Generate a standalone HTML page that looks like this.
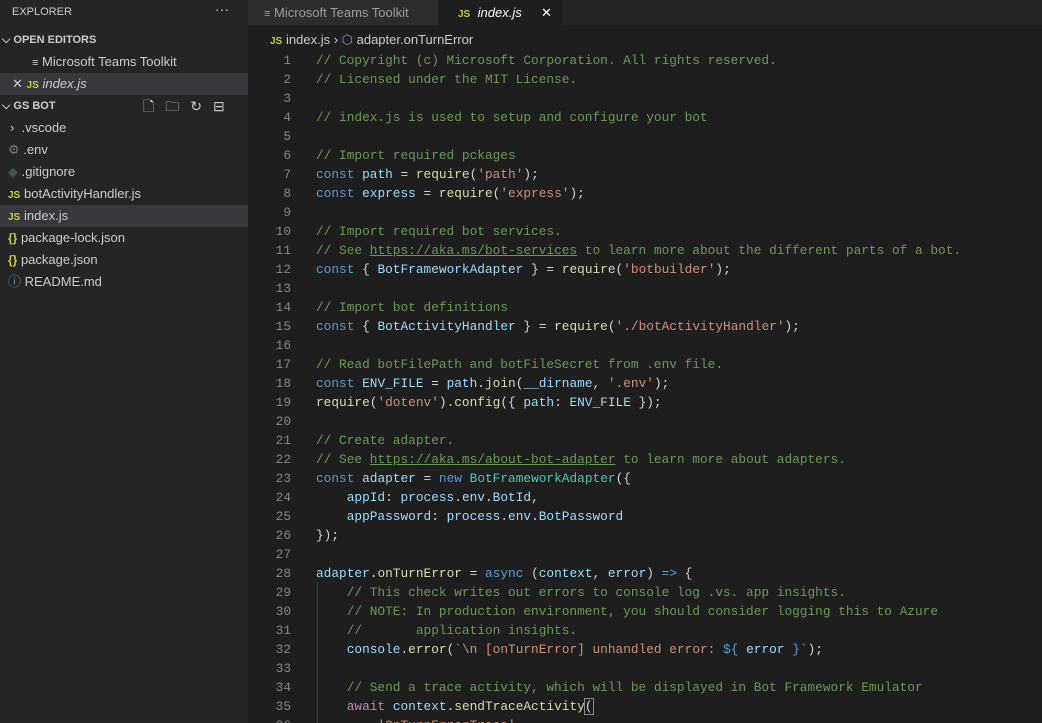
<!DOCTYPE html>
<html style="width:1042px;height:723px;overflow:hidden"><head><meta charset="utf-8"><style>
*{margin:0;padding:0;box-sizing:border-box}
body{width:1042px;height:723px;overflow:hidden;background:#1e1e1e;font-family:"Liberation Sans",sans-serif;color:#ccc;position:relative}
#side{position:absolute;left:0;top:0;width:248px;height:723px;background:#252526}
.row{position:absolute;left:0;width:248px;height:22px;line-height:22px;font-size:13px;color:#ccc;white-space:nowrap}
.sel{background:#37373d}
.hdr{font-size:11px;font-weight:bold;color:#ccc}
.js{color:#cbcb41;font-weight:bold;font-size:10px;display:inline-block;width:16px}
.br{color:#cbcb41;font-weight:bold;font-size:12px}
#tabs{position:absolute;left:248px;top:0;width:794px;height:25px;background:#252526}
.tab{position:absolute;top:0;height:25px;line-height:25px;font-size:13px}
#code{position:absolute;left:248px;top:51px;width:794px;height:672px;overflow:hidden;font-family:"Liberation Mono",monospace;font-size:12.8px;line-height:19px;white-space:pre}
.ln{position:absolute;left:0;width:43px;text-align:right;color:#858585}
.tx{position:absolute;left:68px;color:#d4d4d4}
.c{color:#6a9955}.k{color:#569cd6}.v{color:#9cdcfe}.f{color:#dcdcaa}.s{color:#ce9178}.p{color:#c586c0}.g{color:#4ec9b0}.u{text-decoration:underline}
.guide{position:absolute;left:317px;width:1px;background:#404040}
</style></head><body>
<div id="side">
<div class="row" style="top:1px;padding-left:12px;font-size:11px">EXPLORER<span style="position:absolute;left:215px;top:-3px;font-size:14px">···</span></div>
<div class="row hdr" style="top:29px;padding-left:2px">⌵ OPEN EDITORS</div>
<div class="row" style="top:51px;padding-left:32px"><span style="font-size:11px">≡</span> Microsoft Teams Toolkit</div>
<div class="row sel" style="top:73px;padding-left:12px">✕ <span class="js">JS</span><i>index.js</i></div>
<div class="row hdr" style="top:95px;padding-left:2px">⌵ GS BOT<span style="position:absolute;left:143px;font-size:14px;font-weight:normal;letter-spacing:11px">🗋🗀↻⊟</span></div>
<div class="row" style="top:117px;padding-left:10px">›&nbsp; .vscode</div>
<div class="row" style="top:139px;padding-left:8px"><span style="color:#6d8086">⚙</span> .env</div>
<div class="row" style="top:161px;padding-left:8px"><span style="color:#41535b">◆</span> .gitignore</div>
<div class="row" style="top:183px;padding-left:8px"><span class="js">JS</span>botActivityHandler.js</div>
<div class="row sel" style="top:205px;padding-left:8px"><span class="js">JS</span>index.js</div>
<div class="row" style="top:227px;padding-left:8px"><span class="br">{}</span> package-lock.json</div>
<div class="row" style="top:249px;padding-left:8px"><span class="br">{}</span> package.json</div>
<div class="row" style="top:271px;padding-left:8px"><span style="color:#519aba">ⓘ</span> README.md</div>
</div>
<div id="tabs">
<div class="tab" style="left:0;width:190px;background:#2d2d2d;padding-left:16px;color:#9d9d9d"><span style="font-size:11px">≡</span> Microsoft Teams Toolkit</div>
<div class="tab" style="left:190px;width:124px;background:#1e1e1e;padding-left:20px;color:#fff"><span class="js">JS</span> <i>index.js</i><span style="position:absolute;left:103px">✕</span></div>
</div>
<div style="position:absolute;left:270px;top:31px;font-size:13px;color:#ccc;line-height:18px"><span class="js">JS</span>index.js › <span style="color:#b180d7">⬡</span> adapter.onTurnError</div>
<div class="guide" style="top:582px;height:141px"></div>
<div id="code">
<div class="ln" style="top:0">1</div><div class="tx c" style="top:0">// Copyright (c) Microsoft Corporation. All rights reserved.</div>
<div class="ln" style="top:19px">2</div><div class="tx c" style="top:19px">// Licensed under the MIT License.</div>
<div class="ln" style="top:38px">3</div>
<div class="ln" style="top:57px">4</div><div class="tx c" style="top:57px">// index.js is used to setup and configure your bot</div>
<div class="ln" style="top:76px">5</div>
<div class="ln" style="top:95px">6</div><div class="tx c" style="top:95px">// Import required pckages</div>
<div class="ln" style="top:114px">7</div><div class="tx" style="top:114px"><span class="k">const</span> <span class="v">path</span> = <span class="f">require</span>(<span class="s">'path'</span>);</div>
<div class="ln" style="top:133px">8</div><div class="tx" style="top:133px"><span class="k">const</span> <span class="v">express</span> = <span class="f">require</span>(<span class="s">'express'</span>);</div>
<div class="ln" style="top:152px">9</div>
<div class="ln" style="top:171px">10</div><div class="tx c" style="top:171px">// Import required bot services.</div>
<div class="ln" style="top:190px">11</div><div class="tx c" style="top:190px">// See <span class="u">https://aka.ms/bot-services</span> to learn more about the different parts of a bot.</div>
<div class="ln" style="top:209px">12</div><div class="tx" style="top:209px"><span class="k">const</span> { <span class="v">BotFrameworkAdapter</span> } = <span class="f">require</span>(<span class="s">'botbuilder'</span>);</div>
<div class="ln" style="top:228px">13</div>
<div class="ln" style="top:247px">14</div><div class="tx c" style="top:247px">// Import bot definitions</div>
<div class="ln" style="top:266px">15</div><div class="tx" style="top:266px"><span class="k">const</span> { <span class="v">BotActivityHandler</span> } = <span class="f">require</span>(<span class="s">'./botActivityHandler'</span>);</div>
<div class="ln" style="top:285px">16</div>
<div class="ln" style="top:304px">17</div><div class="tx c" style="top:304px">// Read botFilePath and botFileSecret from .env file.</div>
<div class="ln" style="top:323px">18</div><div class="tx" style="top:323px"><span class="k">const</span> <span class="v">ENV_FILE</span> = <span class="v">path</span>.<span class="f">join</span>(<span class="v">__dirname</span>, <span class="s">'.env'</span>);</div>
<div class="ln" style="top:342px">19</div><div class="tx" style="top:342px"><span class="f">require</span>(<span class="s">'dotenv'</span>).<span class="f">config</span>({ <span class="v">path</span>: <span class="v">ENV_FILE</span> });</div>
<div class="ln" style="top:361px">20</div>
<div class="ln" style="top:380px">21</div><div class="tx c" style="top:380px">// Create adapter.</div>
<div class="ln" style="top:399px">22</div><div class="tx c" style="top:399px">// See <span class="u">https://aka.ms/about-bot-adapter</span> to learn more about adapters.</div>
<div class="ln" style="top:418px">23</div><div class="tx" style="top:418px"><span class="k">const</span> <span class="v">adapter</span> = <span class="k">new</span> <span class="g">BotFrameworkAdapter</span>({</div>
<div class="ln" style="top:437px">24</div><div class="tx" style="top:437px">    <span class="v">appId</span>: <span class="v">process</span>.<span class="v">env</span>.<span class="v">BotId</span>,</div>
<div class="ln" style="top:456px">25</div><div class="tx" style="top:456px">    <span class="v">appPassword</span>: <span class="v">process</span>.<span class="v">env</span>.<span class="v">BotPassword</span></div>
<div class="ln" style="top:475px">26</div><div class="tx" style="top:475px">});</div>
<div class="ln" style="top:494px">27</div>
<div class="ln" style="top:513px">28</div><div class="tx" style="top:513px"><span class="v">adapter</span>.<span class="f">onTurnError</span> = <span class="k">async</span> (<span class="v">context</span>, <span class="v">error</span>) <span class="k">=&gt;</span> {</div>
<div class="ln" style="top:532px">29</div><div class="tx c" style="top:532px">    // This check writes out errors to console log .vs. app insights.</div>
<div class="ln" style="top:551px">30</div><div class="tx c" style="top:551px">    // NOTE: In production environment, you should consider logging this to Azure</div>
<div class="ln" style="top:570px">31</div><div class="tx c" style="top:570px">    //       application insights.</div>
<div class="ln" style="top:589px">32</div><div class="tx" style="top:589px">    <span class="v">console</span>.<span class="f">error</span>(<span class="s">`\n [onTurnError] unhandled error: </span><span class="k">${</span> <span class="v">error</span> <span class="k">}</span><span class="s">`</span>);</div>
<div class="ln" style="top:608px">33</div>
<div class="ln" style="top:627px">34</div><div class="tx c" style="top:627px">    // Send a trace activity, which will be displayed in Bot Framework Emulator</div>
<div class="ln" style="top:646px">35</div><div class="tx" style="top:646px">    <span class="p">await</span> <span class="v">context</span>.<span class="f">sendTraceActivity</span><span style="outline:1px solid #888">(</span></div>
<div class="ln" style="top:665px">36</div><div class="tx" style="top:665px">        <span class="s">'OnTurnErrorTrace'</span>,</div>
</div>
</body></html>
